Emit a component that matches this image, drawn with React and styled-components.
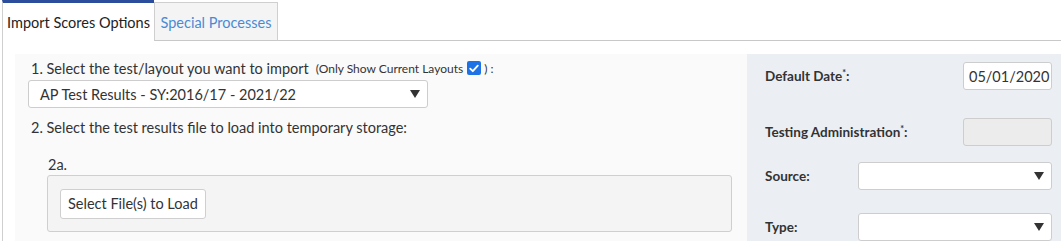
import React from 'react';
import styled, { createGlobalStyle } from 'styled-components';

const Global = createGlobalStyle`
  html, body {
    margin: 0;
    padding: 0;
    background: #fff;
    font-family: "Lato", "Open Sans", sans-serif;
    color: #222;
  }
`;

const Root = styled.div`
  width: 1061px;
  height: 241px;
  overflow: hidden;
`;

const TabBar = styled.div`
  display: flex;
  align-items: flex-end;
  height: 41px;
`;

const Tab = styled.div`
  box-sizing: border-box;
  white-space: nowrap;
  height: ${p => (p.active ? '41px' : '39px')};
  width: ${p => p.w}px;
  display: flex;
  align-items: center;
  justify-content: center;
  font-size: 14.5px;
  color: ${p => (p.active ? '#222' : '#4a8ad4')};
  background: ${p => (p.active ? '#fff' : '#f4f4f4')};
  border-top: ${p => (p.active ? '3px solid #2c4d9c' : '1px solid #cfcfcf')};
  border-left: 1px solid #cfcfcf;
  border-right: ${p => (p.active ? 'none' : '1px solid #cfcfcf')};
  border-bottom: ${p => (p.active ? 'none' : '1px solid #c8c8c8')};
  margin-left: ${p => (p.active ? '2px' : '0')};
  padding-top: ${p => (p.active ? '0' : '1px')};
`;

const Filler = styled.div`
  flex: 1;
  height: 1px;
  background: #c8c8c8;
`;

const Panel = styled.div`
  margin-left: 2px;
  border-left: 1px solid #cfcfcf;
  height: 200px;
  padding: 13px 0 0 12px;
  box-sizing: border-box;
`;

const Body = styled.div`
  display: flex;
  background: #fafafa;
  height: 187px;
`;

const Left = styled.div`
  width: 732px;
  flex: none;
  padding: 5px 15px 0 16px;
  box-sizing: border-box;
`;

const StepLine = styled.div`
  height: 18px;
  font-size: 14.5px;
  color: #333;
  display: flex;
  align-items: center;
  white-space: nowrap;
  margin-left: ${p => p.indent || 0}px;
  margin-top: ${p => p.top || 0}px;
`;

const Small = styled.span`
  font-size: 12px;
  margin-left: 7px;
  display: inline-flex;
  align-items: center;
`;

const Check = styled.span`
  width: 14px;
  height: 14px;
  border-radius: 2px;
  background: #1f72e6;
  display: inline-flex;
  align-items: center;
  justify-content: center;
  margin: 0 3px 0 4px;
`;

const SelectBox = styled.div`
  box-sizing: border-box;
  width: ${p => p.w}px;
  height: 28px;
  background: #fff;
  border: 1px solid #cdcdcd;
  border-radius: 3px;
  display: flex;
  align-items: center;
  justify-content: space-between;
  padding: 0 7px 0 11px;
  font-size: 14.5px;
  color: #333;
  margin-left: ${p => p.ml || 0}px;
  margin-top: ${p => p.top || 0}px;
`;

const Arrow = styled.span`
  width: 0;
  height: 0;
  border-left: 5px solid transparent;
  border-right: 5px solid transparent;
  border-top: 8px solid #333;
`;

const FileBox = styled.div`
  margin: 2px 0 0 16px;
  height: 57px;
  box-sizing: border-box;
  background: #f4f4f4;
  border: 1px solid #cfcfcf;
  border-radius: 3px;
  display: flex;
  align-items: center;
  padding-left: 12px;
`;

const Button = styled.button`
  height: 30px;
  padding: 0 7px;
  background: #fff;
  border: 1px solid #cfcfcf;
  border-radius: 3px;
  font-family: inherit;
  font-size: 14.5px;
  color: #333;
`;

const Side = styled.div`
  flex: 1;
  background: #ebeff4;
  padding: 8px 9px 0 18px;
  box-sizing: border-box;
`;

const Row = styled.div`
  display: flex;
  align-items: center;
  justify-content: space-between;
  height: 28px;
  margin-top: ${p => p.top || 0}px;
`;

const Label = styled.div`
  font-size: 13.5px;
  font-weight: 700;
  color: #333;
  sup {
    font-size: 9px;
    line-height: 0;
    vertical-align: 5px;
  }
`;

const Input = styled.div`
  box-sizing: border-box;
  width: 89px;
  height: 28px;
  background: ${p => (p.disabled ? '#ececec' : '#fff')};
  border: 1px solid #cdcdcd;
  border-radius: 3px;
  font-size: 14.5px;
  display: flex;
  align-items: center;
  padding-left: 5px;
  color: #333;
`;

export default function App() {
  return (
    <Root>
      <Global />
      <TabBar>
        <Tab active w={152}>Import Scores Options</Tab>
        <Tab w={124}>Special Processes</Tab>
        <Filler />
      </TabBar>
      <Panel>
        <Body>
          <Left>
            <StepLine>
              1. Select the test/layout you want to import
              <Small>
                (Only Show Current Layouts
                <Check>
                  <svg width="10" height="9" viewBox="0 0 10 9">
                    <path d="M1.2 4.6 L3.8 7.2 L8.8 1.6" stroke="#fff" strokeWidth="1.8" fill="none" strokeLinecap="round" strokeLinejoin="round" />
                  </svg>
                </Check>
                ) :
              </Small>
            </StepLine>
            <SelectBox w={400} ml={-3} top={3}>
              AP Test Results - SY:2016/17 - 2021/22
              <Arrow />
            </SelectBox>
            <StepLine top={10}>2. Select the test results file to load into temporary storage:</StepLine>
            <StepLine indent={17} top={19}>2a.</StepLine>
            <FileBox>
              <Button>Select File(s) to Load</Button>
            </FileBox>
          </Left>
          <Side>
            <Row>
              <Label>Default Date<sup>*</sup>:</Label>
              <Input>05/01/2020</Input>
            </Row>
            <Row top={28}>
              <Label>Testing Administration<sup>*</sup>:</Label>
              <Input disabled />
            </Row>
            <Row top={16}>
              <Label>Source:</Label>
              <SelectBox w={194}><span /><Arrow /></SelectBox>
            </Row>
            <Row top={23}>
              <Label>Type:</Label>
              <SelectBox w={194}><span /><Arrow /></SelectBox>
            </Row>
          </Side>
        </Body>
      </Panel>
    </Root>
  );
}
